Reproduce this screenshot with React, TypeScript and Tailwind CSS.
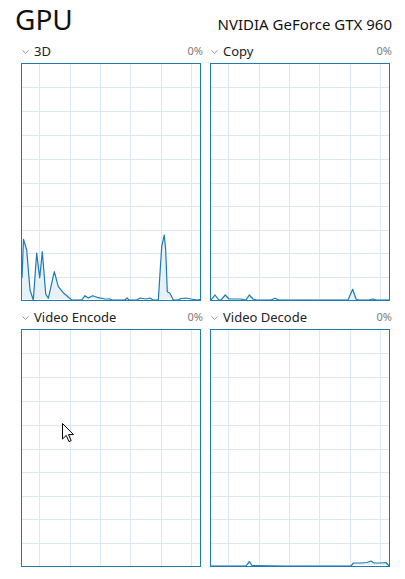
import React from "react";

type Pt = [number, number];

// grid offsets measured from the graph's outer top-left corner
const COLS = [18, 49, 79, 109, 140, 170];
const ROWS = [24, 48, 72, 96, 120, 143, 167, 190, 214];

const W = 180;
const H = 238;

function Graph({ left, top, points }: { left: number; top: number; points: Pt[] }) {
  const bottom = top + H - 2;
  const line = points.map((p) => p.join(",")).join(" ");
  const fill =
    points.length > 0
      ? `${points[0][0]},${bottom} ${line} ${points[points.length - 1][0]},${bottom}`
      : "";

  return (
    <div className="w-[180px] h-[238px] border border-[#1f7ab3] bg-white">
      <svg
        className="block w-[178px] h-[236px]"
        viewBox={`${left + 1} ${top + 1} ${W - 2} ${H - 2}`}
        preserveAspectRatio="none"
      >
        {COLS.map((c) => (
          <line key={"c" + c} x1={left + c + 0.5} x2={left + c + 0.5} y1={top} y2={top + H} stroke="#d9e9f3" strokeWidth={1} />
        ))}
        {ROWS.map((r) => (
          <line key={"r" + r} x1={left} x2={left + W} y1={top + r + 0.5} y2={top + r + 0.5} stroke="#d9e9f3" strokeWidth={1} />
        ))}
        {points.length > 0 && (
          <>
            <polygon points={fill} fill="#e6f1f8" />
            <polyline points={line} fill="none" stroke="#1f7ab3" strokeWidth={1.2} strokeLinejoin="round" />
          </>
        )}
      </svg>
    </div>
  );
}

function Label({ name }: { name: string }) {
  return (
    <div className="h-[20px] flex items-center justify-between pb-[3px]">
      <div className="flex items-center gap-[5px] pl-[1px]">
        <svg width="7" height="4" viewBox="0 0 7 4" className="mt-[1px]">
          <polyline points="0.5,0.5 3.5,3.3 6.5,0.5" fill="none" stroke="#8a8a8a" strokeWidth={0.9} />
        </svg>
        <span className="text-[13px] text-[#222]">{name}</span>
      </div>
      <span className="text-[11px] text-[#7a7a7a] -mr-[2px]">0%</span>
    </div>
  );
}

const threeD: Pt[] = [
  [22, 278], [23.5, 239.3], [26.7, 250], [30, 290], [33.3, 300], [36.7, 253], [39.7, 278],
  [42.3, 251.7], [45.7, 294], [48.3, 298.3], [54.3, 271.7], [58.3, 286.7], [63.3, 292.7],
  [71.7, 300], [81.7, 300], [85, 295.7], [88.3, 298], [92.7, 295.7], [98.3, 297.7],
  [105, 299], [110, 299], [112, 300], [125, 300], [127, 298], [129, 300], [137, 300],
  [140, 298], [146, 299], [150, 298], [153, 300], [158.3, 300], [161.7, 246.7],
  [164.3, 235], [165.7, 250], [167.3, 291.7], [170, 293.3], [173.3, 300], [178, 300],
  [181, 298.5], [186, 298], [191, 299], [197, 300], [200, 299.5],
];

const copy: Pt[] = [
  [210, 300], [214, 295], [218, 300], [220, 300], [224.3, 295], [228, 299], [240, 299],
  [244, 300], [245, 300], [248.3, 295], [252, 299], [255, 300], [270, 300], [274, 298.3],
  [278, 300], [347, 300], [351.7, 289.3], [355, 299], [358, 300], [368, 300],
  [371.7, 299], [375, 300], [389, 300],
];

const decode: Pt[] = [
  [210, 566], [245, 566], [248.3, 561.7], [251, 565.5], [283, 566], [350, 566],
  [352.5, 563], [360, 563], [366, 562.5], [370, 561], [373, 563], [380, 563],
  [385, 562.5], [388, 566],
];

export default function App() {
  return (
    <div
      className="relative w-[405px] h-[579px] bg-white overflow-hidden"
      style={{ fontFamily: '"Noto Sans", "Open Sans", sans-serif' }}
    >
      <div className="flex items-baseline justify-between pl-[15px] pr-[13px] pt-[1px] h-[43px]">
        <span className="text-[28px] leading-[36px] text-[#111]">GPU</span>
        <span className="text-[15px] text-[#111]">NVIDIA GeForce GTX 960</span>
      </div>

      <div className="grid grid-cols-[180px_180px] gap-x-[9px] gap-y-[8px] pl-[21px]">
        <div>
          <Label name="3D" />
          <Graph left={21} top={63} points={threeD} />
        </div>
        <div>
          <Label name="Copy" />
          <Graph left={209} top={63} points={copy} />
        </div>
        <div>
          <Label name="Video Encode" />
          <Graph left={21} top={329} points={[]} />
        </div>
        <div>
          <Label name="Video Decode" />
          <Graph left={209} top={329} points={decode} />
        </div>
      </div>

      {/* mouse pointer */}
      <svg className="absolute left-[62px] top-[423px]" width="13" height="20" viewBox="0 0 13 20">
        <path
          d="M0.5 0.5 L0.5 16 L4.2 12.4 L7 18.6 L9.2 17.6 L6.5 11.6 L11.5 11.6 Z"
          fill="#fff"
          stroke="#000"
          strokeWidth={1}
          strokeLinejoin="miter"
        />
      </svg>
    </div>
  );
}
